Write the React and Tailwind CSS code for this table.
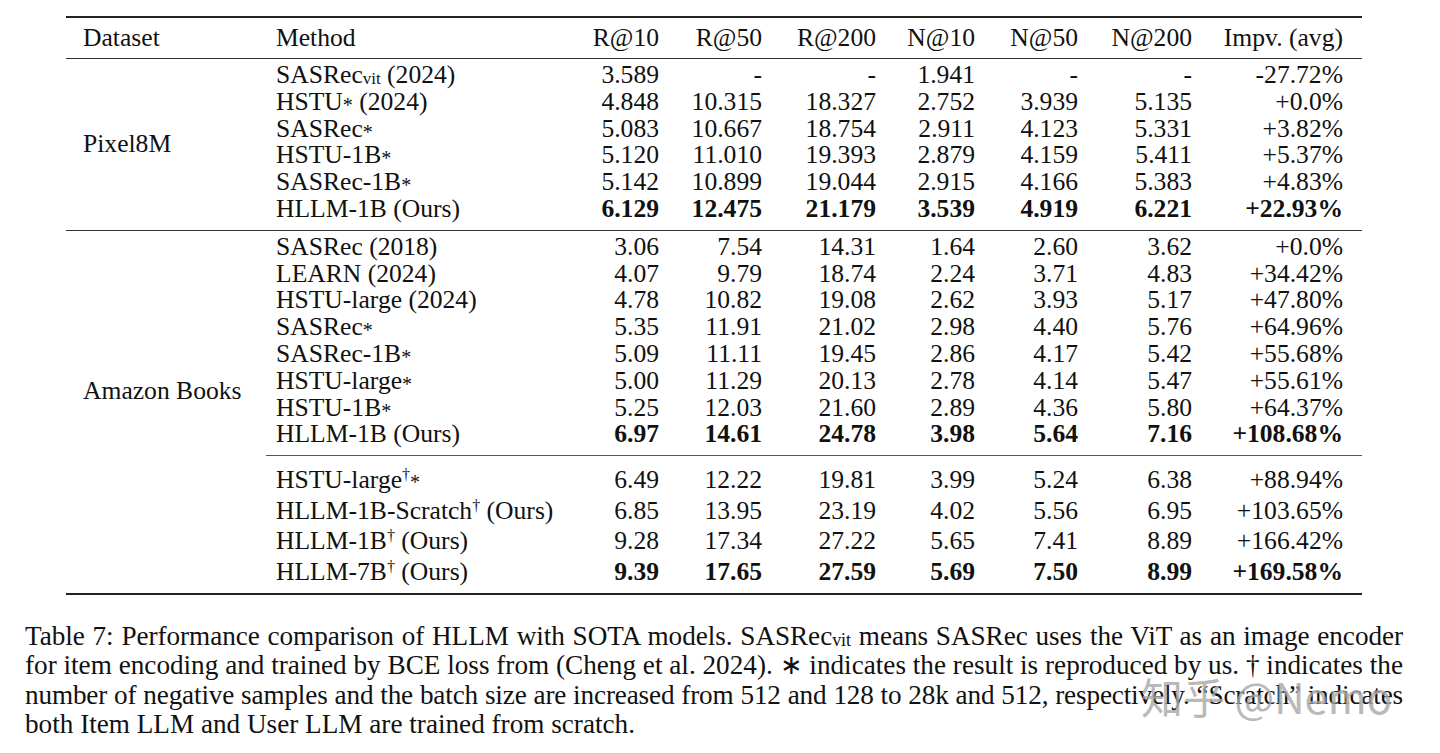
import React from "react";

const cols = "grid grid-cols-[299px_113px_103px_114px_99px_103px_114px_151px]";

const star = <sup className="text-[20px] leading-none relative top-[2px]">*</sup>;
const dag = <sup className="text-[16px] leading-none">†</sup>;
const vit = <sub className="text-[17px] relative top-[1px] align-baseline leading-none">vit</sub>;

const pixel = [
  [<>SASRec{vit} (2024)</>, "3.589", "-", "-", "1.941", "-", "-", "-27.72%"],
  [<>HSTU{star} (2024)</>, "4.848", "10.315", "18.327", "2.752", "3.939", "5.135", "+0.0%"],
  [<>SASRec{star}</>, "5.083", "10.667", "18.754", "2.911", "4.123", "5.331", "+3.82%"],
  [<>HSTU-1B{star}</>, "5.120", "11.010", "19.393", "2.879", "4.159", "5.411", "+5.37%"],
  [<>SASRec-1B{star}</>, "5.142", "10.899", "19.044", "2.915", "4.166", "5.383", "+4.83%"],
  ["HLLM-1B (Ours)", "6.129", "12.475", "21.179", "3.539", "4.919", "6.221", "+22.93%", true],
];

const amazon = [
  ["SASRec (2018)", "3.06", "7.54", "14.31", "1.64", "2.60", "3.62", "+0.0%"],
  ["LEARN (2024)", "4.07", "9.79", "18.74", "2.24", "3.71", "4.83", "+34.42%"],
  ["HSTU-large (2024)", "4.78", "10.82", "19.08", "2.62", "3.93", "5.17", "+47.80%"],
  [<>SASRec{star}</>, "5.35", "11.91", "21.02", "2.98", "4.40", "5.76", "+64.96%"],
  [<>SASRec-1B{star}</>, "5.09", "11.11", "19.45", "2.86", "4.17", "5.42", "+55.68%"],
  [<>HSTU-large{star}</>, "5.00", "11.29", "20.13", "2.78", "4.14", "5.47", "+55.61%"],
  [<>HSTU-1B{star}</>, "5.25", "12.03", "21.60", "2.89", "4.36", "5.80", "+64.37%"],
  ["HLLM-1B (Ours)", "6.97", "14.61", "24.78", "3.98", "5.64", "7.16", "+108.68%", true],
];

const scaled = [
  [<>HSTU-large<sup className="text-[16px] leading-none">†</sup><sup className="text-[20px] leading-none relative top-[1px]">*</sup></>, "6.49", "12.22", "19.81", "3.99", "5.24", "6.38", "+88.94%"],
  [<>HLLM-1B-Scratch{dag} (Ours)</>, "6.85", "13.95", "23.19", "4.02", "5.56", "6.95", "+103.65%"],
  [<>HLLM-1B{dag} (Ours)</>, "9.28", "17.34", "27.22", "5.65", "7.41", "8.89", "+166.42%"],
  [<>HLLM-7B{dag} (Ours)</>, "9.39", "17.65", "27.59", "5.69", "7.50", "8.99", "+169.58%", true],
];

const Row = ({ r, h }) => (
  <div className={`${cols} items-center ${h}`}>
    <div className="pl-[10px] whitespace-nowrap">{r[0]}</div>
    {r.slice(1, 8).map((v, i) => (
      <div key={i} className={`text-right pr-[19px] whitespace-nowrap ${r[8] ? "font-bold" : ""}`}>
        {v}
      </div>
    ))}
  </div>
);

export default function App() {
  return (
    <div className="relative w-[1440px] h-[753px] bg-white text-[#111] overflow-hidden [font-family:Liberation_Serif,serif]">
      {/* table */}
      <div className="ml-[66px] mt-[16px] w-[1296px] text-[25.6px] leading-[26.8px]">
        <div className="border-t-2 border-[#222]" />
        <div className="flex h-[40px] items-center">
          <div className="w-[200px] pl-[17px]">Dataset</div>
          <div className={cols}>
            {["Method", "R@10", "R@50", "R@200", "N@10", "N@50", "N@200", "Impv. (avg)"].map((h, i) => (
              <div key={h} className={i === 0 ? "pl-[10px]" : "text-right pr-[19px] whitespace-nowrap"}>
                {h}
              </div>
            ))}
          </div>
        </div>
        <div className="border-t border-[#333]" />

        {/* Pixel8M */}
        <div className="flex">
          <div className="w-[200px] pl-[17px] flex items-center">Pixel8M</div>
          <div className="pt-[3px] pb-[7px]">
            {pixel.map((r, i) => (
              <Row key={i} r={r} h="h-[26.8px]" />
            ))}
          </div>
        </div>
        <div className="border-t border-[#333]" />

        {/* Amazon Books */}
        <div className="flex">
          <div className="w-[200px] pl-[17px] pt-[147px]">Amazon Books</div>
          <div>
            <div className="pt-[3px] pb-[7px]">
              {amazon.map((r, i) => (
                <Row key={i} r={r} h="h-[26.8px]" />
              ))}
            </div>
            <div className="border-t border-[#555]" />
            <div className="pt-[9px] pb-[5px]">
              {scaled.map((r, i) => (
                <Row key={i} r={r} h="h-[30.6px]" />
              ))}
            </div>
          </div>
        </div>
        <div className="border-t-2 border-[#222]" />
      </div>

      {/* caption */}
      <div className="ml-[25px] mt-[27px] w-[1378px] text-[27.2px] leading-[29.6px]">
        <div className="text-justify [text-align-last:justify] whitespace-nowrap tracking-[-0.05px]">
          Table 7: Performance comparison of HLLM with SOTA models. SASRec<sub className="text-[18px] relative top-[1px] align-baseline leading-none">vit</sub> means SASRec uses the ViT as an image encoder
        </div>
        <div className="text-justify [text-align-last:justify] whitespace-nowrap">
          for item encoding and trained by BCE loss from (Cheng et al. 2024). ∗ indicates the result is reproduced by us. † indicates the
        </div>
        <div className="text-justify [text-align-last:justify] whitespace-nowrap tracking-[-0.15px]">
          number of negative samples and the batch size are increased from 512 and 128 to 28k and 512, respectively. “Scratch” indicates
        </div>
        <div>both Item LLM and User LLM are trained from scratch.</div>
      </div>

      {/* watermark */}
      <div className="absolute left-[1141px] top-[671px] text-[42px] leading-[50px] text-[#a8a8a8] opacity-80 [font-family:Noto_Sans_CJK_SC,sans-serif] whitespace-nowrap">
        知乎 @Nemo
      </div>
    </div>
  );
}
